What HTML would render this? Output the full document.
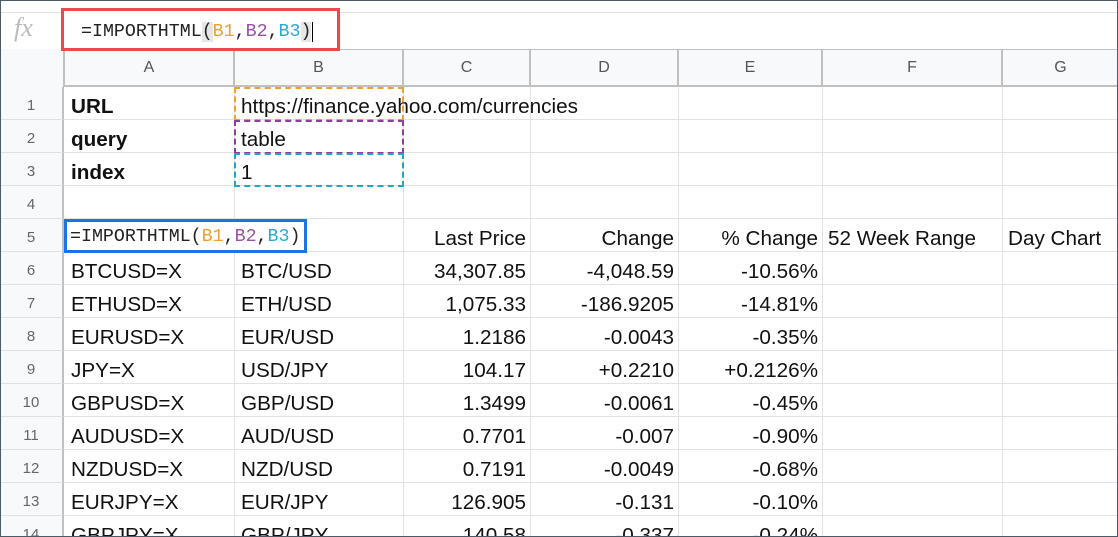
<!DOCTYPE html>
<html><head><meta charset="utf-8"><style>
*{margin:0;padding:0;box-sizing:border-box}
html,body{width:1118px;height:537px;overflow:hidden}
body{background:#fff;font-family:"Liberation Sans",Arial,sans-serif;position:relative}
.frame{position:absolute;left:0;top:0;width:1118px;height:537px;border:1px solid #4a5a66;z-index:20;pointer-events:none}
.fbar{position:absolute;left:0;top:12px;width:1118px;height:37px;border-top:1px solid #e0e0e0}
.fx{position:absolute;left:14px;top:13px;font-family:"Liberation Serif",serif;font-style:italic;font-size:26px;color:#bbb}
.redbox{position:absolute;left:61px;top:8px;width:279px;height:43px;border:3px solid #f04848;z-index:10;background:#fff}
.mono{font-family:"Liberation Mono","DejaVu Sans Mono",monospace;font-size:18.3px;color:#222}
.o{color:#f0a030}.p{color:#9b4fa8}.c{color:#2aa8d0}
.hl{background:#e6e6e6}
.hdr{position:absolute;top:49px;height:38px;background:#f8f9fa;border-top:1px solid #c0c0c0;border-bottom:2px solid #c0c0c0}
.ch{position:absolute;top:49px;height:38px;text-align:center;line-height:38px;font-size:16px;color:#555;border-right:2px solid #c0c0c0}
.rn{position:absolute;left:0;width:64px;height:33px;background:#f8f9fa;border-right:2px solid #c0c0c0;border-bottom:1px solid #e0e0e0;text-align:center;line-height:38px;font-size:15px;color:#666}
.row{position:absolute;left:64px;width:1054px;height:33px;border-bottom:1px solid #e2e2e2}
.vl{position:absolute;top:87px;width:1px;height:450px;background:#e2e2e2}
.cell{position:absolute;height:33px;line-height:40px;font-size:20.7px;color:#111;white-space:nowrap;overflow:visible}
.r{text-align:right}
.b{font-weight:bold}
.dash{position:absolute;left:234px;width:170px;height:34px;border:2px dashed;z-index:5}
.bluebox{position:absolute;left:64px;top:219px;width:243px;height:34px;border:3px solid #1a73e8;background:#fff;z-index:10;line-height:30px;padding-left:3px}
</style></head><body>
<div class="frame"></div>
<div class="fbar"></div>
<div class="fx">fx</div>
<div class="redbox"><div class="mono" style="position:absolute;left:17px;top:10px;line-height:22px">=IMPORTHTML<span class="hl">(</span><span class="o">B1</span>,<span class="p">B2</span>,<span class="c">B3</span><span class="hl">)</span><span style="border-left:1.5px solid #000;margin-left:1px"></span></div></div>

<div class="hdr" style="left:0;width:1118px"></div>
<div class="ch" style="left:0;width:65px;background:#f8f9fa"></div>
<div class="ch" style="left:65px;width:170px">A</div>
<div class="ch" style="left:235px;width:169px">B</div>
<div class="ch" style="left:404px;width:127px">C</div>
<div class="ch" style="left:531px;width:148px">D</div>
<div class="ch" style="left:679px;width:144px">E</div>
<div class="ch" style="left:823px;width:180px">F</div>
<div class="ch" style="left:1003px;width:115px;border-right:none">G</div>

<div class="vl" style="left:234px"></div><div class="vl" style="left:403px"></div><div class="vl" style="left:530px"></div><div class="vl" style="left:678px"></div><div class="vl" style="left:822px"></div><div class="vl" style="left:1002px"></div>

<div id="rows"></div>
<script>
var data=[
["URL","https://finance.yahoo.com/currencies","","","","",""],
["query","table","","","","",""],
["index","1","","","","",""],
["","","","","","",""],
["","","Last Price","Change","% Change","52 Week Range","Day Chart"],
["BTCUSD=X","BTC/USD","34,307.85","-4,048.59","-10.56%","",""],
["ETHUSD=X","ETH/USD","1,075.33","-186.9205","-14.81%","",""],
["EURUSD=X","EUR/USD","1.2186","-0.0043","-0.35%","",""],
["JPY=X","USD/JPY","104.17","+0.2210","+0.2126%","",""],
["GBPUSD=X","GBP/USD","1.3499","-0.0061","-0.45%","",""],
["AUDUSD=X","AUD/USD","0.7701","-0.007","-0.90%","",""],
["NZDUSD=X","NZD/USD","0.7191","-0.0049","-0.68%","",""],
["EURJPY=X","EUR/JPY","126.905","-0.131","-0.10%","",""],
["GBPJPY=X","GBP/JPY","140.58","-0.337","-0.24%","",""]];
var cols=[[64,170],[234,169],[403,127],[530,148],[678,144],[822,180],[1002,116]];
var h="";
for(var i=0;i<data.length;i++){var y=87+i*33;
h+='<div class="rn" style="top:'+y+'px">'+(i+1)+'</div><div class="row" style="top:'+y+'px"></div>';
for(var j=0;j<7;j++){var t=data[i][j];if(!t)continue;var c=cols[j];
var right=(j>=2&&j<=4);var st='top:'+y+'px;';
if(right)st+='left:'+c[0]+'px;width:'+(c[1]-4)+'px;';else st+='left:'+(c[0]+7)+'px;';
if(i==4&&j>=5)st='top:'+y+'px;left:'+(c[0]+6)+'px;';
h+='<div class="cell'+(right&&!(i==4&&j>=5)?' r':'')+(j==0&&i<3?' b':'')+'" style="'+st+'">'+t+'</div>';}}
document.getElementById('rows').innerHTML=h;
</script>
<div class="dash" style="top:87px;border-color:#f0a030"></div>
<div class="dash" style="top:120px;border-color:#8e3f9e"></div>
<div class="dash" style="top:153px;border-color:#22a5c8"></div>
<div class="bluebox"><span class="mono">=IMPORTHTML(<span class="o">B1</span>,<span class="p">B2</span>,<span class="c">B3</span>)</span></div>
</body></html>
